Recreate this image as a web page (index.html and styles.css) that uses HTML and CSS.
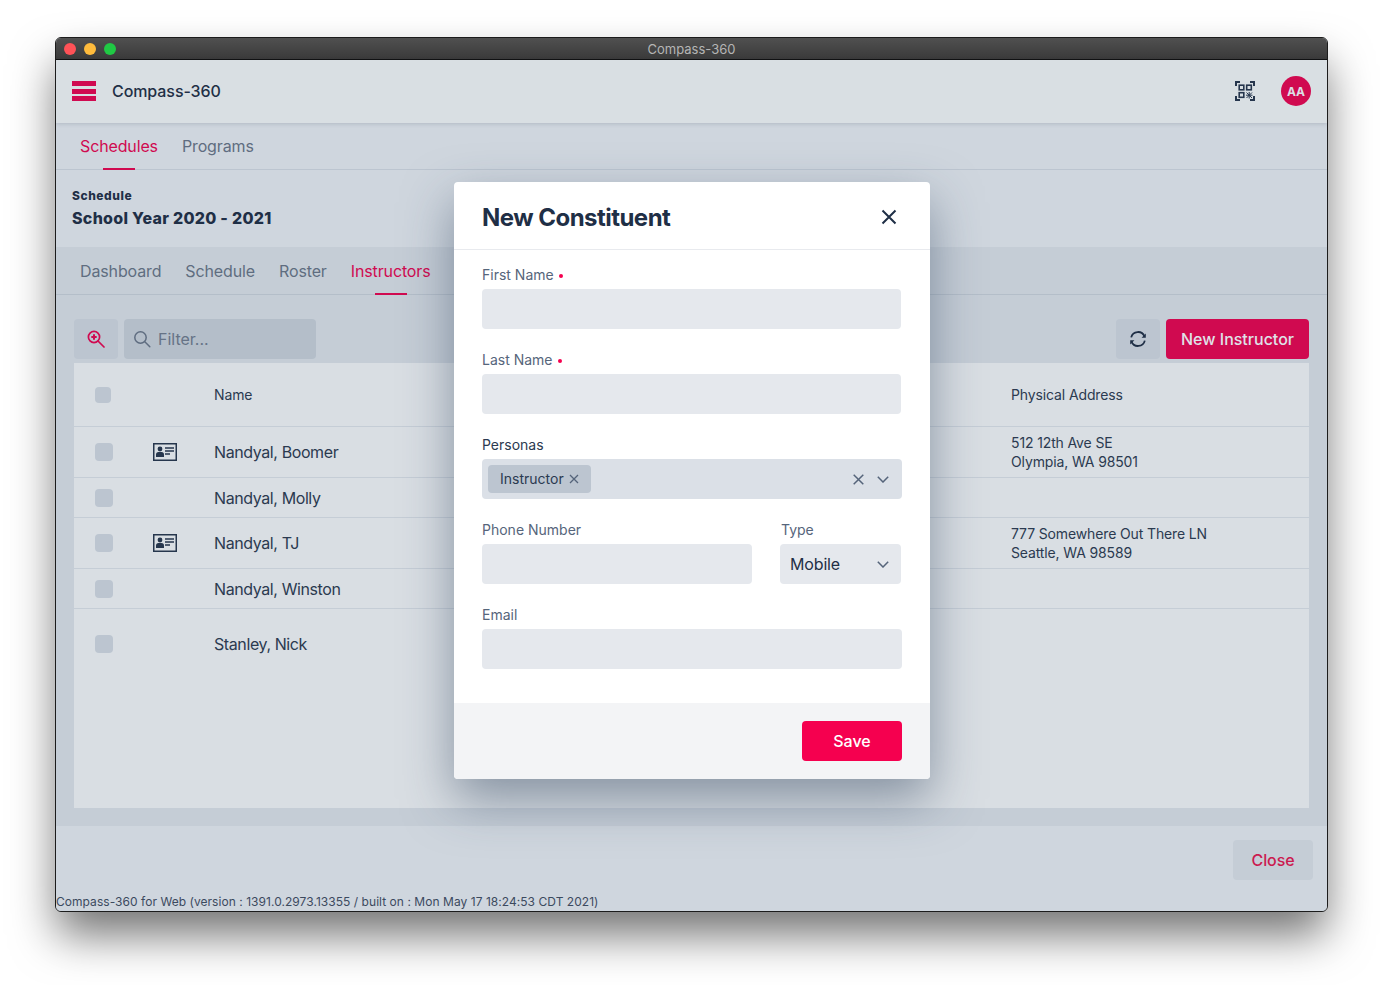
FILE: index.html
```html
<!DOCTYPE html>
<html lang="en">
<head>
<meta charset="utf-8">
<title>Compass-360</title>
<link rel="stylesheet" href="styles.css">
</head>
<body>
<div class="window">
  <div class="titlebar">
    <div class="lights"><span class="light red"></span><span class="light yellow"></span><span class="light green"></span></div>
    <span class="window-title">Compass-360</span>
  </div>
  <header class="topbar">
    <div class="brand">
      <div class="burger"><span></span><span></span><span></span></div>
      <span class="brand-name">Compass-360</span>
    </div>
    <div class="top-actions">
      <svg class="qr" width="20" height="20" viewBox="0 0 20 20" fill="none" stroke="#26364d" stroke-width="1.6">
        <path d="M1 5V1h4M15 1h4v4M19 15v4h-4M5 19H1v-4" stroke-width="2"/>
        <rect x="4.2" y="4.2" width="4.6" height="4.6"/><rect x="11.7" y="4.2" width="4.6" height="4.6"/><rect x="4.2" y="11.7" width="4.6" height="4.6"/>
        <path d="M11.5 11.5l5.5 5.5M17 11.5L11.5 17M14.2 11v6.5M11 14.2h6.5" stroke-width="1"/>
      </svg>
      <div class="avatar">AA</div>
    </div>
  </header>
  <nav class="tabs main-tabs">
    <a class="tab active">Schedules</a>
    <a class="tab">Programs</a>
  </nav>
  <section class="schedule-head">
    <div class="eyebrow">Schedule</div>
    <div class="schedule-name">School Year 2020 - 2021</div>
  </section>
  <main class="content">
    <nav class="tabs sub-tabs">
      <a class="tab">Dashboard</a>
      <a class="tab">Schedule</a>
      <a class="tab">Roster</a>
      <a class="tab active">Instructors</a>
    </nav>
    <div class="panel">
      <div class="toolbar">
        <div class="toolbar-left">
          <button class="icon-btn">
            <svg width="18" height="18" viewBox="0 0 18 18" fill="none" stroke="#d00a50" stroke-width="1.7"><circle cx="7" cy="7" r="5.6"/><path d="M11 11l6 6" stroke-linecap="round"/><path d="M4.3 7h5.4M7 4.3v5.4" stroke-width="2"/></svg>
          </button>
          <div class="filter">
            <svg width="18" height="18" viewBox="0 0 18 18" fill="none" stroke="#5f6d80" stroke-width="1.5"><circle cx="7.5" cy="7.5" r="5.7"/><path d="M11.8 11.8l5 5" stroke-linecap="round"/></svg>
            <span>Filter...</span>
          </div>
        </div>
        <div class="toolbar-right">
          <button class="icon-btn">
            <svg width="18" height="18" viewBox="0 0 18 18" fill="none" stroke="#1f2f46" stroke-width="1.8"><path d="M2.2 7.4A7 7 0 0 1 15.5 6.4"/><path d="M15.8 10.6A7 7 0 0 1 2.5 11.6"/><path d="M16.8 3.6v4.2h-4.2z M1.2 14.4v-4.2h4.2z" fill="#1f2f46" stroke="none"/></svg>
          </button>
          <button class="primary-btn">New Instructor</button>
        </div>
      </div>
      <div class="table">
        <div class="row head">
          <span class="check small"></span><span></span><span class="name">Name</span><span class="addr">Physical Address</span>
        </div>
        <div class="row tall">
          <span class="check"></span>
          <svg class="card" width="24" height="18" viewBox="0 0 24 18"><rect x="0.75" y="0.75" width="22.5" height="16.5" fill="none" stroke="#26364d" stroke-width="1.5"/><circle cx="7" cy="6" r="2.4" fill="#26364d"/><path d="M3 14v-2.5Q3 9 5.5 9h3Q11 9 11 11.5V14z" fill="#26364d"/><path d="M12 5h9M12 8h9M12 11h5" stroke="#26364d" stroke-width="1.3"/></svg>
          <span class="name">Nandyal, Boomer</span>
          <span class="addr">512 12th Ave SE<br>Olympia, WA 98501</span>
        </div>
        <div class="row short">
          <span class="check"></span><span></span><span class="name">Nandyal, Molly</span><span class="addr"></span>
        </div>
        <div class="row tall">
          <span class="check"></span>
          <svg class="card" width="24" height="18" viewBox="0 0 24 18"><rect x="0.75" y="0.75" width="22.5" height="16.5" fill="none" stroke="#26364d" stroke-width="1.5"/><circle cx="7" cy="6" r="2.4" fill="#26364d"/><path d="M3 14v-2.5Q3 9 5.5 9h3Q11 9 11 11.5V14z" fill="#26364d"/><path d="M12 5h9M12 8h9M12 11h5" stroke="#26364d" stroke-width="1.3"/></svg>
          <span class="name">Nandyal, TJ</span>
          <span class="addr">777 Somewhere Out There LN<br>Seattle, WA 98589</span>
        </div>
        <div class="row short">
          <span class="check"></span><span></span><span class="name">Nandyal, Winston</span><span class="addr"></span>
        </div>
        <div class="row last">
          <span class="check"></span><span></span><span class="name">Stanley, Nick</span><span class="addr"></span>
        </div>
      </div>
    </div>
  </main>
  <footer class="footer">
    <div class="footer-actions"><button class="close-btn">Close</button></div>
    <div class="version">Compass-360 for Web (version : 1391.0.2973.13355 / built on : Mon May 17 18:24:53 CDT 2021)</div>
  </footer>

  <div class="modal">
    <div class="modal-head">
      <h2>New Constituent</h2>
      <svg width="16" height="16" viewBox="0 0 16 16" stroke="#1f2f46" stroke-width="2"><path d="M1.5 1.5l13 13M14.5 1.5l-13 13"/></svg>
    </div>
    <div class="modal-body">
      <div class="field">
        <label>First Name <i class="req"></i></label>
        <div class="input narrow"></div>
      </div>
      <div class="field">
        <label>Last Name <i class="req"></i></label>
        <div class="input narrow"></div>
      </div>
      <div class="field">
        <label class="dark">Personas</label>
        <div class="multi">
          <div class="chip"><span class="chip-text">Instructor</span>
            <svg width="10" height="10" viewBox="0 0 10 10" stroke="#55647a" stroke-width="1.3"><path d="M1 1l8 8M9 1L1 9"/></svg>
          </div>
          <div class="multi-icons">
            <svg width="11" height="11" viewBox="0 0 11 11" stroke="#55647a" stroke-width="1.5"><path d="M.7.7l9.6 9.6M10.3.7L.7 10.3"/></svg>
            <svg class="chev" width="12" height="7" viewBox="0 0 12 7" fill="none" stroke="#55647a" stroke-width="1.5"><path d="M.8.8L6 6l5.2-5.2"/></svg>
          </div>
        </div>
      </div>
      <div class="field-row">
        <div class="field phone">
          <label>Phone Number</label>
          <div class="input"></div>
        </div>
        <div class="field type">
          <label class="type-label">Type</label>
          <div class="select">Mobile
            <svg class="chev" width="12" height="7" viewBox="0 0 12 7" fill="none" stroke="#55647a" stroke-width="1.5"><path d="M.8.8L6 6l5.2-5.2"/></svg>
          </div>
        </div>
      </div>
      <div class="field">
        <label>Email</label>
        <div class="input"></div>
      </div>
    </div>
    <div class="modal-foot"><button class="save-btn">Save</button></div>
  </div>
</div>
</body>
</html>
```
FILE: styles.css
```css
* { box-sizing: border-box; }
html, body { margin: 0; height: 100%; background: #fff; }
body { font-family: Inter, "Liberation Sans", sans-serif; color: #1f2f46; padding: 37px 55px 0; overflow: hidden; }
button { font-family: inherit; border: 0; cursor: pointer; }

.window {
  position: relative; width: 1273px; height: 875px;
  display: flex; flex-direction: column;
  border: 1px solid #1c1c1c; border-radius: 6px; overflow: hidden;
  background: #cfd6de;
  box-shadow: 0 25px 45px -2px rgba(0, 0, 0, .55);
}

.titlebar {
  height: 22px; flex: none; position: relative;
  display: flex; align-items: center; justify-content: center;
  background: linear-gradient(#505050, #3a3a3a);
  border-bottom: 1px solid #0f0f0f;
}
.lights { position: absolute; left: 8px; top: 5px; display: flex; gap: 8px; }
.light { width: 12px; height: 12px; border-radius: 50%; }
.red { background: #ff5257; } .yellow { background: #febb3c; } .green { background: #20c944; }
.window-title { font-size: 13px; color: #b5b5b5; }

.topbar {
  height: 63px; flex: none; display: flex; align-items: center; justify-content: space-between;
  padding: 0 16px 1px; background: #d9dfe3; box-shadow: 0 1px 4px rgba(60, 75, 95, .2); position: relative;
}
.brand { display: flex; align-items: center; gap: 16px; }
.burger { width: 24px; display: flex; flex-direction: column; gap: 2.5px; }
.burger span { display: block; height: 5px; background: #d00a50; }
.brand-name { font-size: 16px; font-weight: 500; letter-spacing: -.08px; }
.top-actions { display: flex; align-items: center; gap: 26px; }
.avatar {
  width: 30px; height: 30px; border-radius: 50%; background: #d00a50; color: #dcdfe5;
  font-size: 12px; font-weight: 700; display: flex; align-items: center; justify-content: center;
}

.tabs { display: flex; gap: 8px; padding: 0 16px; }
.tab { position: relative; padding: 0 8px; font-size: 16px; letter-spacing: -.13px; color: #5f6d80; display: flex; align-items: center; }
.tab.active { color: #d00a50; }
.tab.active::after {
  content: ""; position: absolute; left: 50%; bottom: -1px; width: 32px; height: 2px;
  margin-left: -16px; background: #d00a50;
}
.main-tabs { height: 47px; flex: none; border-bottom: 1px solid #bcc5d0; }
.sub-tabs { height: 48px; flex: none; border-bottom: 1px solid #b4bec9; }

.schedule-head { height: 77px; flex: none; padding: 18px 16px 0; }
.eyebrow { font-size: 12px; font-weight: 800; line-height: 16px; letter-spacing: .55px; }
.schedule-name { font-size: 16px; font-weight: 800; line-height: 20px; margin-top: 4px; letter-spacing: .28px; }

.content { flex: none; height: 579px; background: #c5cdd6; display: flex; flex-direction: column; }
.panel { padding: 24px 18px 18px; display: flex; flex-direction: column; flex: 1; min-height: 0; }
.toolbar { display: flex; justify-content: space-between; height: 40px; margin-bottom: 4px; flex: none; }
.toolbar-left, .toolbar-right { display: flex; gap: 6px; }
.icon-btn {
  width: 44px; height: 40px; border-radius: 4px; background: #bcc5d0;
  display: flex; align-items: center; justify-content: center; padding: 0;
}
.filter {
  width: 192px; height: 40px; border-radius: 4px; background: #b4bec9; color: #667386;
  display: flex; align-items: center; gap: 7px; padding: 0 9px; font-size: 16px;
}
.primary-btn {
  height: 40px; width: 143px; border-radius: 4px; background: #d00a50; color: #dfe2e8;
  font-size: 16px; font-weight: 500;
}

.table { flex: 1; background: #d9dee3; }
.row {
  display: grid; grid-template-columns: 58px 61px 797px 1fr; align-items: center;
  padding-left: 21px; border-bottom: 1px solid #c5cdd6;
  font-size: 16px; color: #2b3a50;
}
.row.head { height: 64px; }
.row.tall { height: 51px; }
.row.short { height: 40px; }
.row.last { height: 70px; border-bottom: 0; }
.name { letter-spacing: -.4px; }
.check { width: 18px; height: 18px; border-radius: 4px; background: #bcc5d0; }
.check.small { width: 16px; height: 16px; }
.head .name, .head .addr { font-size: 14px; font-weight: 420; letter-spacing: -.12px; }
.addr { font-size: 14px; line-height: 19px; letter-spacing: -.13px; }
.card { display: block; }

.footer { flex: 1; min-height: 0; display: flex; flex-direction: column; justify-content: space-between; background: #cfd6de; }
.footer-actions { display: flex; justify-content: flex-end; padding: 14px 14px 0; }
.close-btn { width: 80px; height: 40px; border-radius: 4px; background: #c5cdd6; color: #cb1a50; font-size: 16px; font-weight: 500; letter-spacing: -.1px; }
.version { font-size: 12px; line-height: 18px; color: #3c4a5e; height: 18px; letter-spacing: .045px; }

.modal {
  position: absolute; left: 398px; top: 144px; width: 476px; height: 597px;
  background: #fff; border-radius: 4px;
  box-shadow: 0 20px 50px rgba(50, 70, 95, .5);
  display: flex; flex-direction: column;
}
.modal-head {
  height: 68px; flex: none; display: flex; align-items: center; justify-content: space-between;
  padding: 2px 33px 0 28px; border-bottom: 1px solid #e8eaee;
}
.modal-head h2 { margin: 2px 0 0; font-size: 24px; font-weight: 700; letter-spacing: -.53px; color: #1f2f46; }
.modal-body { flex: 1; padding: 15px 28px 0; display: flex; flex-direction: column; gap: 21px; }
.field { display: flex; flex-direction: column; gap: 4px; }
.field label { font-size: 14px; line-height: 20px; color: #56657b; display: flex; align-items: center; gap: 5px; }
.field label.dark { color: #2b3a50; }
.req { width: 4px; height: 4px; border-radius: 50%; background: #f5004f; margin-top: 2px; }
.input { height: 40px; border-radius: 4px; background: #e5e8ed; }
.input.narrow { margin-right: 1px; }
.multi {
  height: 40px; border-radius: 4px; background: #dbe0e7;
  display: flex; align-items: center; justify-content: space-between; padding: 0 13px 0 6px;
}
.chip {
  height: 28px; width: 103px; border-radius: 4px; background: #bcc5d0; color: #2b3a50; font-size: 14px;
  display: flex; align-items: center; gap: 5px; padding-left: 12px;
}
.chip-text { position: relative; top: -1px; }
.multi-icons { display: flex; align-items: center; gap: 13px; }
.field-row { display: flex; }
.phone { width: 270px; }
.type { width: 121px; margin-left: 28px; }
.field .type-label { padding-left: 1px; }
.select {
  height: 40px; border-radius: 4px; background: #e5e8ed; font-size: 16px; letter-spacing: -.15px; color: #1f2f46;
  display: flex; align-items: center; justify-content: space-between; padding: 0 12px 0 10px;
}
.modal-foot {
  height: 76px; flex: none; background: #f3f4f6; border-radius: 0 0 4px 4px;
  display: flex; align-items: center; justify-content: flex-end; padding: 0 28px;
}
.save-btn { width: 100px; height: 40px; border-radius: 4px; background: #f5004f; color: #fff; font-size: 16px; font-weight: 500; }
```
